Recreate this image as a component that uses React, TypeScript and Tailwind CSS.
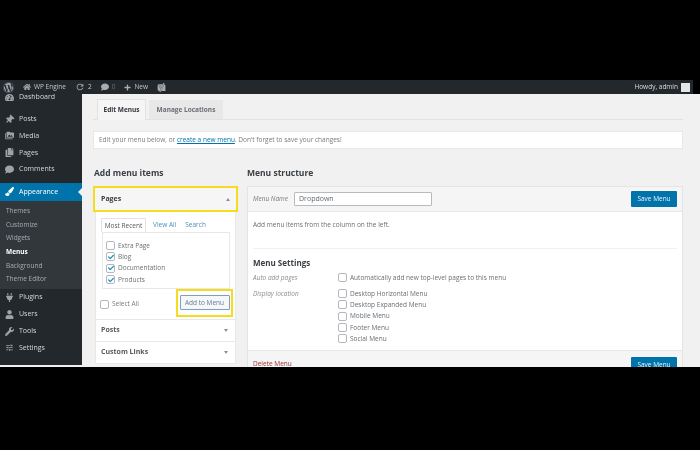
import type { ReactNode } from "react";
import { FaWordpress, FaHome, FaComment, FaPlus, FaThumbtack, FaCopy, FaPaintBrush, FaPlug, FaUser, FaWrench, FaTachometerAlt, FaCheck } from "react-icons/fa";
import { MdPermMedia, MdTune, MdRefresh } from "react-icons/md";
import { SiYoast } from "react-icons/si";

const font = "font-['Open_Sans',sans-serif]";

const MenuRow = ({ icon, label, className = "" }: { icon: ReactNode; label: string; className?: string }) => (
  <div className={`flex items-center h-[16.8px] pl-[5px] gap-[5px] text-[7px] text-[#d5d8db] ${className}`}>
    <span className="w-[9px] flex justify-center text-[9px] text-[#9ea3a8]">{icon}</span>
    {label}
  </div>
);

const Box = ({ checked, className = "" }: { checked?: boolean; className?: string }) => (
  <span className={`w-[9px] h-[9px] shrink-0 rounded-[2px] border border-[#b4b8bc] bg-white flex items-center justify-center ${className}`}>
    {checked && <FaCheck className="text-[6px] text-[#1e8cbe]" />}
  </span>
);

const Check = ({ label, checked, className }: { label: string; checked?: boolean; className?: string }) => (
  <div className="flex items-center h-[11.3px] gap-[3px] text-[6.5px] text-[#6a6e73]">
    <Box checked={checked} className={className} />
    {label}
  </div>
);

export default function App() {
  return (
    <div className={`w-[700px] h-[450px] bg-black overflow-hidden ${font} blur-[0.6px]`}>
      <div className="h-[80px]" />
      <div className="h-[287px] w-[700px] bg-[#f1f1f1] flex flex-col overflow-hidden">
        {/* admin bar */}
        <div className="h-[14px] shrink-0 flex items-center bg-[#23282d] text-[6.5px] text-[#c3c6c9] relative z-10">
          <div className="w-[693px] flex items-center">
            <FaWordpress className="ml-[3px] text-[11px] text-[#9ea3a8]" />
            <FaHome className="ml-[9px] text-[8px] text-[#9ea3a8]" />
            <span className="ml-[3px]">WP Engine</span>
            <MdRefresh className="ml-[9px] text-[10px] text-[#a8adb2]" />
            <span className="ml-[3px]">2</span>
            <FaComment className="ml-[9px] text-[8px] text-[#a8adb2]" />
            <span className="ml-[3px] text-[#6a6e73]">0</span>
            <FaPlus className="ml-[9px] text-[7px] text-[#a8adb2]" />
            <span className="ml-[3px]">New</span>
            <SiYoast className="ml-[9px] text-[9px] text-[#a8adb2]" />
            <span className="ml-auto text-[#dcdee0]">Howdy, admin</span>
            <span className="ml-[3px] mr-[3px] w-[9px] h-[9px] bg-[#e4e5e6]" />
          </div>
          <div className="flex-1 self-stretch bg-black" />
        </div>

        <div className="flex flex-1 min-h-0">
          {/* sidebar */}
          <aside className="w-[82px] h-[271px] self-start shrink-0 bg-[#23282d] overflow-hidden">
            <div className="-mt-[5px]">
              <MenuRow icon={<FaTachometerAlt />} label="Dashboard" className="mb-[5px]" />
              <MenuRow icon={<FaThumbtack className="rotate-45" />} label="Posts" />
              <MenuRow icon={<MdPermMedia />} label="Media" />
              <MenuRow icon={<FaCopy />} label="Pages" />
              <MenuRow icon={<FaComment />} label="Comments" className="mb-[5px]" />
              <div className="h-[18px] bg-[#0073aa] flex items-center pl-[5px] gap-[5px] text-[7px] text-white relative">
                <FaPaintBrush className="w-[9px] text-[9px]" />
                Appearance
                <span className="absolute right-0 top-[5px] border-y-[4px] border-y-transparent border-r-[4px] border-r-[#f1f1f1]" />
              </div>
              <div className="bg-[#32373c] py-[3px] text-[6.5px] text-[#a9adb2]">
                {["Themes", "Customize", "Widgets", "Menus", "Background", "Theme Editor"].map((s) => (
                  <div key={s} className={`h-[13.7px] flex items-center pl-[6px] ${s === "Menus" ? "text-white font-bold" : ""}`}>
                    {s}
                  </div>
                ))}
              </div>
              <MenuRow icon={<FaPlug />} label="Plugins" />
              <MenuRow icon={<FaUser />} label="Users" />
              <MenuRow icon={<FaWrench />} label="Tools" />
              <MenuRow icon={<MdTune />} label="Settings" />
            </div>
          </aside>

          {/* content */}
          <main className="flex-1 min-w-0 pl-[11px] pr-[17px] text-[#555a60]">
            <div className="h-[26px] pl-[4px] flex items-end gap-[3px] border-b border-[#e2e2e3] text-[6.5px] font-bold">
              <div className="h-[21px] w-[49px] flex items-center justify-center bg-[#f5f5f5] border border-b-0 border-[#e2e2e3] -mb-px text-[#32373c]">Edit Menus</div>
              <div className="h-[19px] w-[74px] flex items-center justify-center bg-[#e8e8e8] text-[#6a6e73]">Manage Locations</div>
            </div>

            <div className="mt-[11px] h-[18px] flex items-center pl-[5px] bg-white border border-[#e8e8e8] text-[6.5px] text-[#777b80]">
              <span>Edit your menu below, or <span className="text-[#0073aa] underline">create a new menu</span>. Don't forget to save your changes!</span>
            </div>

            <div className="mt-[16px] flex gap-[9px]">
              {/* left column */}
              <div className="w-[145px] shrink-0">
                <h2 className="h-[16px] pl-[1px] text-[8.5px] leading-[16px] font-bold text-[#3c4044]">Add menu items</h2>
                <div className="mt-[5px] h-[26px] flex items-center justify-between px-[6px] bg-[#f6f6f6] border-[2.5px] border-[#f5dc1e] text-[7px] font-bold text-[#3c4044]">
                  Pages
                  <span className="border-x-[2px] border-x-transparent border-b-[3px] border-b-[#8a8e92]" />
                </div>
                <div className="mx-[2px] bg-white border-x border-[#e8e8e8] px-[5px] pt-[6px]">
                  <div className="flex items-end h-[14px] text-[6.5px]">
                    <div className="h-[14px] w-[45px] flex items-center justify-center border border-b-0 border-[#e2e2e3] text-[#555a60]">Most Recent</div>
                    <span className="ml-[7px] text-[#4a90b8] self-center">View All</span>
                    <span className="ml-[9px] text-[#4a90b8] self-center">Search</span>
                  </div>
                  <div className="ml-[1px] w-[128px] h-[57px] border border-[#e8e8e8] pl-[3px] pt-[7px]">
                    <Check label="Extra Page" />
                    <Check label="Blog" checked />
                    <Check label="Documentation" checked />
                    <Check label="Products" checked className="border-[#5b9dc4]" />
                  </div>
                </div>
                <div className="mx-[2px] h-[31px] bg-white border-x border-b border-[#e8e8e8] flex items-center pl-[4px] pr-[2px] text-[6.5px] text-[#777b80]">
                  <Box />
                  <span className="ml-[3px]">Select All</span>
                  <div className="ml-auto mb-[3px] w-[57px] h-[28px] border-[2.5px] border-[#f5dc1e] flex items-center justify-center">
                    <div className="w-[50px] h-[15px] flex items-center justify-center bg-[#f7f7f7] border border-[#7e9ec4] rounded-[1px] text-[#5c7ea6]">Add to Menu</div>
                  </div>
                </div>
                <div className="mx-[2px] h-[22px] bg-white border-x border-b border-[#e8e8e8] flex items-center justify-between pl-[5px] pr-[7px] text-[7px] font-bold text-[#555a60]">
                  Posts
                  <span className="border-x-[2px] border-x-transparent border-t-[3px] border-t-[#8a8e92]" />
                </div>
                <div className="mx-[2px] h-[22px] bg-white border-x border-b border-[#e8e8e8] flex items-center justify-between pl-[5px] pr-[7px] text-[7px] font-bold text-[#555a60]">
                  Custom Links
                  <span className="border-x-[2px] border-x-transparent border-t-[3px] border-t-[#8a8e92]" />
                </div>
              </div>

              {/* right column */}
              <div className="flex-1 min-w-0">
                <h2 className="h-[16px] text-[8.5px] leading-[16px] font-bold text-[#3c4044]">Menu structure</h2>
                <div className="mt-[5px] border border-[#e4e4e4] bg-white">
                  <div className="h-[25px] flex items-center px-[5px] bg-[#f5f5f5] border-b border-[#e8e8e8]">
                    <span className="w-[41px] text-[6.5px] italic text-[#777b80]">Menu Name</span>
                    <div className="w-[138px] h-[14px] flex items-center pl-[4px] bg-white border border-[#b8bbbe] rounded-[1px] text-[7px] text-[#666a6e]">Dropdown</div>
                    <div className="ml-auto w-[46px] h-[16px] flex items-center justify-center bg-[#0073aa] rounded-[1px] text-[6.5px] text-[#e8f2f7]">Save Menu</div>
                  </div>
                  <div className="h-[138px] px-[5px]">
                    <p className="pt-[8px] h-[37px] border-b border-[#f2f2f2] text-[6.5px] text-[#6a6e73]">Add menu items from the column on the left.</p>
                    <h3 className="mt-[8px] h-[12px] text-[8px] leading-[12px] font-bold text-[#3c4044]">Menu Settings</h3>
                    <div className="mt-[3px] flex items-center h-[11px] text-[6.5px]">
                      <span className="w-[85px] italic text-[#8a8e92]">Auto add pages</span>
                      <Check label="Automatically add new top-level pages to this menu" />
                    </div>
                    <div className="mt-[5px] flex text-[6.5px]">
                      <span className="w-[85px] h-[11px] leading-[11px] italic text-[#8a8e92]">Display location</span>
                      <div>
                        <Check label="Desktop Horizontal Menu" />
                        <Check label="Desktop Expanded Menu" />
                        <Check label="Mobile Menu" />
                        <Check label="Footer Menu" />
                        <Check label="Social Menu" />
                      </div>
                    </div>
                  </div>
                  <div className="h-[26px] flex items-start justify-between px-[5px] bg-[#f5f5f5] border-t border-[#e8e8e8] text-[6.5px]">
                    <span className="mt-[8px] text-[#a03030] underline">Delete Menu</span>
                    <div className="mt-[6px] w-[46px] h-[16px] flex items-center justify-center bg-[#0073aa] rounded-[1px] text-[#e8f2f7]">Save Menu</div>
                  </div>
                </div>
              </div>
            </div>
          </main>
        </div>
      </div>
    </div>
  );
}
